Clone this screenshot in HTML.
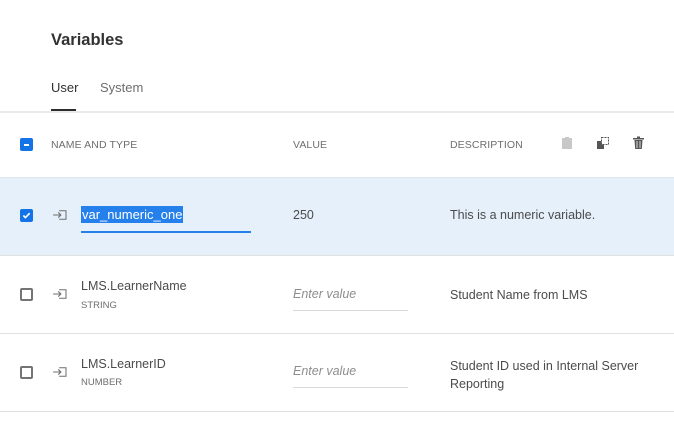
<!DOCTYPE html>
<html><head><meta charset="utf-8"><style>
*{margin:0;padding:0;box-sizing:border-box}
body{width:674px;height:448px;background:#fff;font-family:"Liberation Sans",sans-serif;color:#4b4b4b;position:relative;overflow:hidden}
.a{position:absolute;white-space:nowrap}
.cb{position:absolute;width:13px;height:13px;border:2px solid #747474;border-radius:2px;background:#fff}
.cb.on{background:#1473e6;border-color:#1473e6}
.hd{font-size:10.5px;color:#6e6e6e;letter-spacing:.1px}
.t{font-size:12.5px;color:#4b4b4b}
.sub{font-size:9.5px;color:#6e6e6e}
.ph{font-size:12.5px;font-style:italic;color:#8e8e8e}
.line{position:absolute;height:1px;background:#e1e1e1;left:0;width:674px}
</style></head><body>
<div class="a" style="left:51px;top:31px;font-size:16.5px;font-weight:bold;color:#323232">Variables</div>
<div class="a" style="left:51px;top:80px;font-size:13px;color:#323232">User</div>
<div class="a" style="left:100px;top:80px;font-size:13px;color:#6e6e6e">System</div>
<div class="line" style="top:111px;height:2px;background:#eaeaea"></div>
<div class="a" style="left:51px;top:109px;width:25px;height:2px;background:#2c2c2c"></div>

<div class="cb on" style="left:20px;top:138px"><div style="position:absolute;left:2px;top:3.5px;width:5px;height:2px;background:#fff"></div></div>
<div class="a hd" style="left:51px;top:139px">NAME AND TYPE</div>
<div class="a hd" style="left:293px;top:139px">VALUE</div>
<div class="a hd" style="left:450px;top:139px">DESCRIPTION</div>
<svg class="a" style="left:560px;top:136px" width="14" height="14" viewBox="0 0 14 14"><rect x="2" y="2" width="10" height="11" fill="#c8c8c8"/><rect x="5" y="1" width="4" height="3" fill="#c8c8c8"/></svg>
<svg class="a" style="left:596px;top:136px" width="14" height="14" viewBox="0 0 14 14"><rect x="1" y="5" width="7" height="8" fill="#555"/><rect x="5.5" y="1.5" width="7" height="7" fill="#fff" stroke="#555" stroke-dasharray="2 1"/></svg>
<svg class="a" style="left:632px;top:136px" width="13" height="14" viewBox="0 0 13 14"><rect x="1" y="2" width="11" height="1.5" fill="#555"/><rect x="5" y="0.5" width="3" height="2" fill="#555"/><path d="M2.5 4h8l-.7 9h-6.6z" fill="#555"/><path d="M5 5v7M8 5v7" stroke="#fff" stroke-width=".8"/></svg>

<div class="a" style="left:0;top:177px;width:674px;height:78px;background:#e5f0fb;border-top:1px solid #dde6ef"></div>
<div class="line" style="top:255px"></div>
<div class="line" style="top:333px"></div>
<div class="line" style="top:411px"></div>

<div class="cb on" style="left:20px;top:209px"><svg style="position:absolute;left:0;top:0" width="9" height="9" viewBox="0 0 10 10"><path d="M1.5 5l2.3 2.3L8.5 2.5" stroke="#fff" stroke-width="1.8" fill="none"/></svg></div>
<svg class="a" style="left:52px;top:209px" width="16" height="12" viewBox="0 0 18 14"><path d="M1 7h9M7 4l3 3-3 3" stroke="#6e6e6e" stroke-width="1.3" fill="none"/><path d="M8 2h8v10H8" stroke="#6e6e6e" stroke-width="1.2" fill="none"/></svg>
<div class="a" style="left:81px;top:206px;height:17px;background:#2680eb;color:#fff;font-size:13px;line-height:17px;padding:0 1px">var_numeric_one</div>
<div class="a" style="left:81px;top:231px;width:170px;height:2px;background:#2680eb"></div>
<div class="a t" style="left:293px;top:208px">250</div>
<div class="a t" style="left:450px;top:208px">This is a numeric variable.</div>

<div class="cb" style="left:20px;top:288px"></div>
<svg class="a" style="left:52px;top:288px" width="16" height="12" viewBox="0 0 18 14"><path d="M1 7h9M7 4l3 3-3 3" stroke="#6e6e6e" stroke-width="1.3" fill="none"/><path d="M8 2h8v10H8" stroke="#6e6e6e" stroke-width="1.2" fill="none"/></svg>
<div class="a t" style="left:81px;top:279px">LMS.LearnerName</div>
<div class="a sub" style="left:81px;top:300px">STRING</div>
<div class="a ph" style="left:293px;top:287px">Enter value</div>
<div class="a" style="left:293px;top:310px;width:115px;height:1px;background:#d8d8d8"></div>
<div class="a t" style="left:450px;top:288px">Student Name from LMS</div>

<div class="cb" style="left:20px;top:366px"></div>
<svg class="a" style="left:52px;top:366px" width="16" height="12" viewBox="0 0 18 14"><path d="M1 7h9M7 4l3 3-3 3" stroke="#6e6e6e" stroke-width="1.3" fill="none"/><path d="M8 2h8v10H8" stroke="#6e6e6e" stroke-width="1.2" fill="none"/></svg>
<div class="a t" style="left:81px;top:357px">LMS.LearnerID</div>
<div class="a sub" style="left:81px;top:377px">NUMBER</div>
<div class="a ph" style="left:293px;top:364px">Enter value</div>
<div class="a" style="left:293px;top:387px;width:115px;height:1px;background:#d8d8d8"></div>
<div class="a t" style="left:450px;top:357px;line-height:18px">Student ID used in Internal Server<br>Reporting</div>
</body></html>
